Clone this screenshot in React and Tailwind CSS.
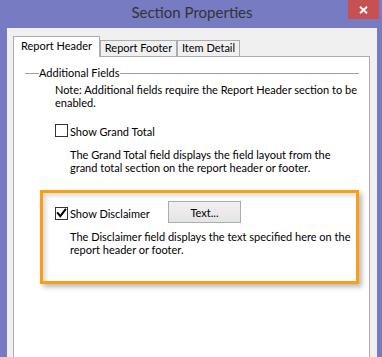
import React from "react";

function Checkbox({ checked }) {
  return (
    <div className="w-[13px] h-[13px] border border-[#333333] bg-white flex items-center justify-center shrink-0">
      {checked && (
        <svg width="11" height="11" viewBox="0 0 11 11">
          <path d="M1.8 5.2 L4.3 8.2 L9.3 1.6" fill="none" stroke="#000" strokeWidth="2" strokeLinecap="square" strokeLinejoin="miter" />
        </svg>
      )}
    </div>
  );
}

export default function App() {
  return (
    <div className="w-[382px] h-[357px] bg-[#767bc2] flex flex-col overflow-hidden font-['Lato',sans-serif] text-[11px] text-black">
      <div className="relative h-[28px] shrink-0 flex justify-center">
        <span className="text-[15px] leading-[28px] text-[#333333] pl-[2px] -mt-[2px] whitespace-nowrap">Section Properties</span>
        <div className="absolute top-0 right-[3px] w-[31px] h-[19px] bg-[#c75050] flex items-center justify-center">
          <svg width="9" height="8" viewBox="0 0 9 8">
            <path d="M1 0.8 L8 7.2 M8 0.8 L1 7.2" stroke="#ffffff" strokeWidth="2" />
          </svg>
        </div>
      </div>
      <div className="flex-1 ml-[7px] mr-[5px] bg-[#f0f0f0] pt-[8px] pl-[6px] pr-[7px] flex flex-col">
        <div className="flex items-end h-[20px] shrink-0">
          <div className="relative z-10 -mb-px h-[21px] w-[87px] bg-white border border-b-0 border-[#acacac] pt-[2px] text-center leading-[14px] whitespace-nowrap">
            Report Header
          </div>
          <div className="h-[16px] w-[77px] bg-[#f0f0f0] border border-b-0 border-[#acacac] text-center leading-[14px] whitespace-nowrap">
            Report Footer
          </div>
          <div className="h-[16px] w-[63px] bg-[#f0f0f0] border border-b-0 border-[#acacac] text-center leading-[14px] whitespace-nowrap">
            Item Detail
          </div>
        </div>
        <div className="flex-1 bg-white border-l border-t border-r border-[#acacac] flex flex-col">
          <div className="mt-[9px] ml-[11px] mr-[10px] flex items-center h-[14px]">
            <div className="w-[14px] h-px bg-[#a0a0a0]" />
            <span className="leading-[14px] whitespace-nowrap">Additional Fields</span>
            <div className="flex-1 h-px bg-[#a0a0a0] ml-[1px]" />
          </div>
          <p className="mt-[3px] ml-[41px] leading-[13px] whitespace-nowrap">
            Note: Additional fields require the Report Header section to be
            <br />
            enabled.
          </p>
          <div className="mt-[15px] ml-[41px] flex items-start">
            <Checkbox checked={false} />
            <span className="ml-[2px] mt-[1px] leading-[13px] whitespace-nowrap">Show Grand Total</span>
          </div>
          <p className="mt-[10px] ml-[56px] leading-[13px] whitespace-nowrap">
            The Grand Total field displays the field layout from the
            <br />
            grand total section on the report header or footer.
          </p>
          <div className="mt-[16px] ml-[26px] w-[319px] h-[94px] border-[3px] border-[#fb9e12] bg-white shadow-[3px_3px_5px_rgba(0,0,0,0.28),inset_3px_3px_4px_rgba(0,0,0,0.14)]">
            <div className="mt-[8px] ml-[12px] flex items-start">
              <div className="mt-[6px]">
                <Checkbox checked={true} />
              </div>
              <span className="ml-[2px] mt-[6px] w-[98px] leading-[13px] whitespace-nowrap">Show Disclaimer</span>
              <div className="w-[73px] h-[22px] border border-[#adadad] bg-gradient-to-b from-[#f0f0f0] to-[#e5e5e5] flex items-center justify-center leading-[13px]">
                Text...
              </div>
            </div>
            <p className="mt-[7px] ml-[27px] leading-[13px] whitespace-nowrap">
              The Disclaimer field displays the text specified here on the
              <br />
              report header or footer.
            </p>
          </div>
        </div>
      </div>
    </div>
  );
}
